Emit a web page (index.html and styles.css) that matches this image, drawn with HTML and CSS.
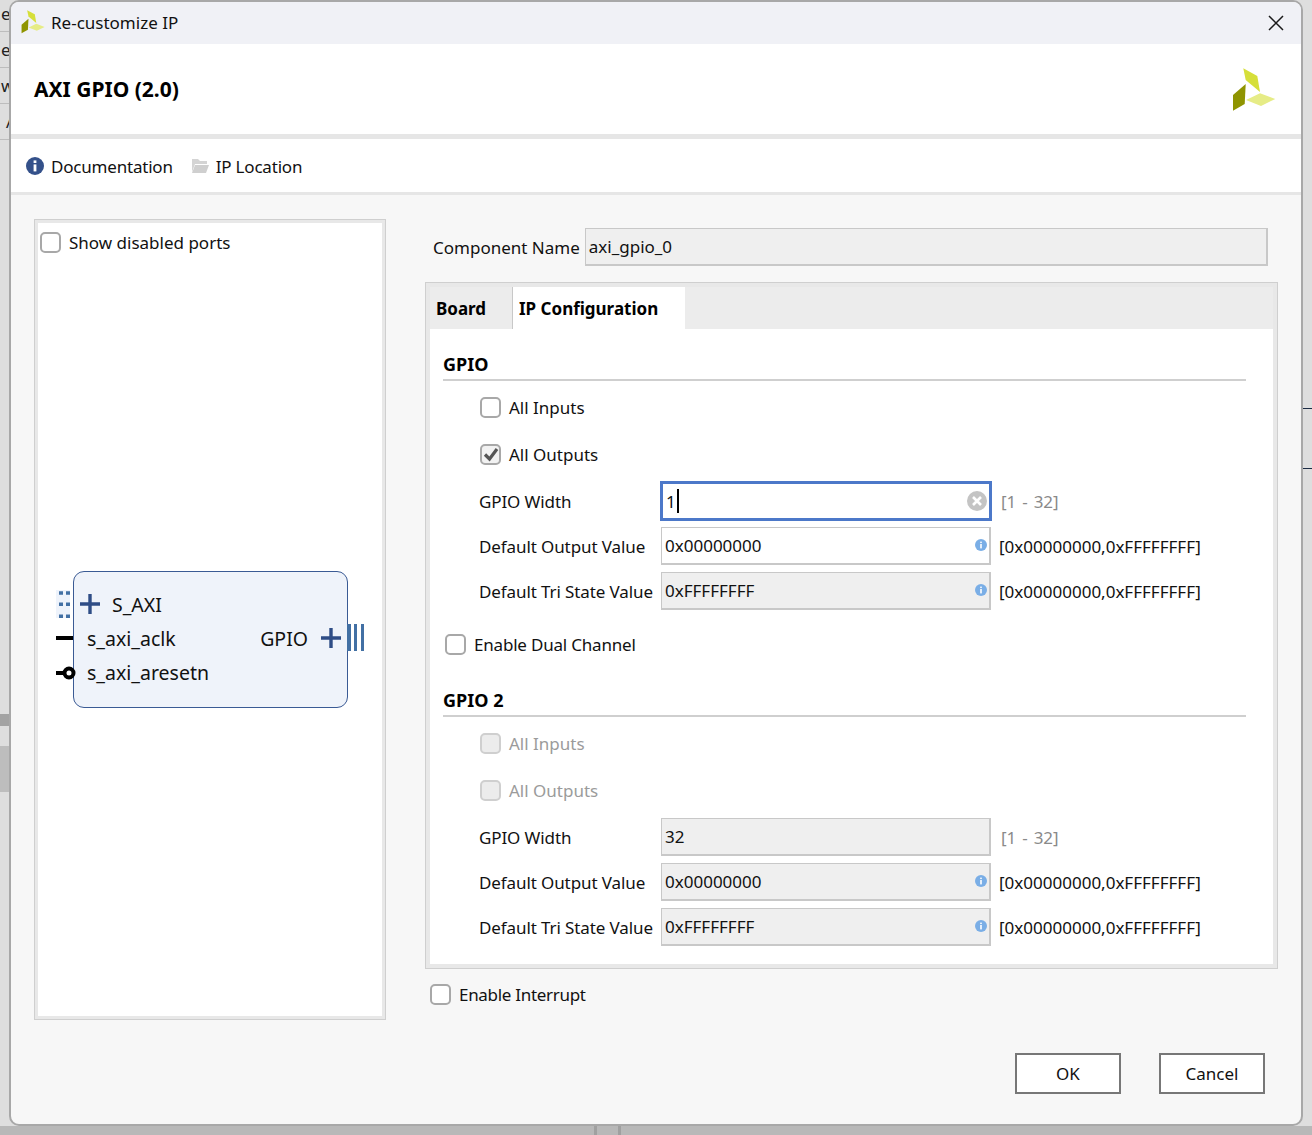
FILE: index.html
```html
<!DOCTYPE html>
<html lang="en">
<head>
<meta charset="utf-8">
<title>Re-customize IP</title>
<link rel="stylesheet" href="styles.css">
</head>
<body>
<div class="desktop">
  <div class="bg-frag f1">e</div>
  <div class="bg-frag f2">e</div>
  <div class="bg-frag f3">w</div>
  <div class="bg-frag f4">A</div>
  <div class="bg-hline h1"></div><div class="bg-hline h2"></div><div class="bg-hline h3"></div><div class="bg-hline h4"></div>
  <div class="bg-band"></div>
  <div class="bg-band2"></div>
  <div class="bg-bottom"></div>
  <div class="bg-tick t1"></div><div class="bg-tick t2"></div>
  <div class="bg-vb v1"></div><div class="bg-vb v2"></div>

  <div class="window">
    <div class="titlebar">
      <svg class="title-logo" viewBox="0 0 44 44" width="24" height="24"><polygon points="11.3,0.3 25.3,8 28,24 13.7,12" fill="#d6df3a"/><polygon points="14,32 28,25.3 43.3,31 29,38" fill="#e6ec86"/><polygon points="1,27 13.7,16 12.7,36 1,42.7" fill="#8f9400"/></svg>
      <span class="title-text">Re-customize IP</span>
      <svg class="close" viewBox="0 0 16 16" width="16" height="16"><path d="M1 1L15 15M15 1L1 15" stroke="#1a1a1a" stroke-width="1.5" fill="none"/></svg>
    </div>
    <div class="header">
      <h1>AXI GPIO (2.0)</h1>
      <svg class="header-logo" viewBox="0 -1 44 44" width="44" height="44"><polygon points="11.3,0.3 25.3,8 28,24 13.7,12" fill="#d6df3a"/><polygon points="14,32 28,25.3 43.3,31 29,38" fill="#e6ec86"/><polygon points="1,27 13.7,16 12.7,36 1,42.7" fill="#8f9400"/></svg>
    </div>
    <div class="toolbar">
      <span class="tool">
        <svg viewBox="0 0 18 18" width="18" height="18"><circle cx="9" cy="9" r="9" fill="#34518a"/><rect x="7.6" y="7.4" width="2.8" height="7" fill="#fff"/><rect x="7.6" y="3.4" width="2.8" height="2.6" fill="#fff"/></svg>
        Documentation
      </span>
      <span class="tool">
        <svg viewBox="0 0 18 16" width="18" height="16"><path d="M1 1h6l2 2h7v3H4L1 14z" fill="#d4d4d4"/><path d="M4 7h14l-3 8H1z" fill="#cfcfcf"/></svg>
        IP Location
      </span>
    </div>
    <div class="main">
      <div class="left-panel">
        <label class="check top-check"><span class="box"></span>Show disabled ports</label>
        <div class="block">
          <div class="block-row"><svg class="plus" viewBox="0 0 20 20" width="20" height="20"><path d="M0 10H20M10 0V20" stroke="#2f4d86" stroke-width="3.4"/></svg><span class="s-axi">S_AXI</span></div>
          <div class="block-row split"><span>s_axi_aclk</span><span class="gpio-port">GPIO<svg class="plus" viewBox="0 0 20 20" width="20" height="20"><path d="M0 10H20M10 0V20" stroke="#2f4d86" stroke-width="3.4"/></svg></span></div>
          <div class="block-row"><span>s_axi_aresetn</span></div>
        </div>
        <svg class="pin pin-dash" viewBox="0 0 14 28" width="14" height="28"><rect width="14" height="28" fill="#eef3fb"/><path d="M3 3H7M10 3H14M3 14.3H7M10 14.3H14M3 26.3H7M10 26.3H14" stroke="#4270a4" stroke-width="3.4"/></svg>
        <svg class="pin pin-clk" viewBox="0 0 17 4" width="17" height="4"><rect width="17" height="4" fill="#000"/></svg>
        <svg class="pin pin-rst" viewBox="0 0 20 16" width="20" height="16"><rect y="6" width="8" height="4" fill="#000"/><circle cx="13" cy="8" r="4.5" fill="#fff" stroke="#000" stroke-width="4"/></svg>
        <svg class="pin pin-bus" viewBox="0 0 17 27" width="17" height="27"><rect x="0" width="4" height="27" fill="#4270a4"/><rect x="7" width="3" height="27" fill="#4270a4"/><rect x="14" width="3" height="27" fill="#4270a4"/></svg>
      </div>
      <div class="right">
        <div class="comp-row"><span>Component Name</span><div class="field off comp-field">axi_gpio_0</div></div>
        <div class="pane">
          <div class="tabs"><span class="tab">Board</span><span class="tab active">IP Configuration</span></div>
          <div class="pane-body">
            <h2 class="sec">GPIO</h2>
            <label class="check opt first"><span class="box"></span>All Inputs</label>
            <label class="check opt"><span class="box on"><svg viewBox="0 0 16 16" width="16" height="16"><path d="M2 8.5L6.5 13L14 3" stroke="#555" stroke-width="3.2" fill="none"/></svg></span>All Outputs</label>
            <div class="grid">
              <span class="lab">GPIO Width</span>
              <div class="field focus"><span class="val">1</span><span class="caret"></span><svg class="clear" viewBox="0 0 20 20" width="20" height="20"><circle cx="10" cy="10" r="10" fill="#c4c4c4"/><path d="M6 6L14 14M14 6L6 14" stroke="#fff" stroke-width="2.6"/></svg></div>
              <span class="range dim">[1 - 32]</span>
              <span class="lab">Default Output Value</span>
              <div class="field">0x00000000<svg class="info" viewBox="0 0 12 12" width="12" height="12"><circle cx="6" cy="6" r="6" fill="#7aaee6"/><rect x="5.2" y="5" width="1.6" height="4.4" fill="#fff"/><rect x="5.2" y="2.6" width="1.6" height="1.5" fill="#fff"/></svg></div>
              <span class="range">[0x00000000,0xFFFFFFFF]</span>
              <span class="lab">Default Tri State Value</span>
              <div class="field off">0xFFFFFFFF<svg class="info" viewBox="0 0 12 12" width="12" height="12"><circle cx="6" cy="6" r="6" fill="#7aaee6"/><rect x="5.2" y="5" width="1.6" height="4.4" fill="#fff"/><rect x="5.2" y="2.6" width="1.6" height="1.5" fill="#fff"/></svg></div>
              <span class="range">[0x00000000,0xFFFFFFFF]</span>
            </div>
            <label class="check dual"><span class="box"></span>Enable Dual Channel</label>
            <h2 class="sec sec2">GPIO 2</h2>
            <label class="check opt first disabled"><span class="box"></span>All Inputs</label>
            <label class="check opt disabled"><span class="box"></span>All Outputs</label>
            <div class="grid grid2">
              <span class="lab">GPIO Width</span>
              <div class="field off">32</div>
              <span class="range dim">[1 - 32]</span>
              <span class="lab">Default Output Value</span>
              <div class="field off">0x00000000<svg class="info" viewBox="0 0 12 12" width="12" height="12"><circle cx="6" cy="6" r="6" fill="#7aaee6"/><rect x="5.2" y="5" width="1.6" height="4.4" fill="#fff"/><rect x="5.2" y="2.6" width="1.6" height="1.5" fill="#fff"/></svg></div>
              <span class="range">[0x00000000,0xFFFFFFFF]</span>
              <span class="lab">Default Tri State Value</span>
              <div class="field off">0xFFFFFFFF<svg class="info" viewBox="0 0 12 12" width="12" height="12"><circle cx="6" cy="6" r="6" fill="#7aaee6"/><rect x="5.2" y="5" width="1.6" height="4.4" fill="#fff"/><rect x="5.2" y="2.6" width="1.6" height="1.5" fill="#fff"/></svg></div>
              <span class="range">[0x00000000,0xFFFFFFFF]</span>
            </div>
          </div>
        </div>
        <label class="check irq"><span class="box"></span>Enable Interrupt</label>
      </div>
    </div>
    <div class="footer">
      <button class="btn">OK</button>
      <button class="btn">Cancel</button>
    </div>
  </div>
</div>
</body>
</html>
```
FILE: styles.css
```css
* { box-sizing: border-box; }
html, body { margin: 0; padding: 0; }
body { font-family: "Noto Sans", "Open Sans", sans-serif; font-size: 17px; color: #111; }
.desktop { position: relative; width: 1312px; height: 1135px; overflow: hidden; background: #dedede; }
.bg-frag { position: absolute; left: 1px; font-size: 17px; line-height: 20px; color: #222; }
.f1 { top: 4px; } .f2 { top: 40px; } .f3 { top: 76px; } .f4 { top: 112px; left: 6px; }
.bg-hline { position: absolute; left: 0; width: 10px; height: 1px; background: #bdbdbd; }
.h1 { top: 31px; } .h2 { top: 67px; } .h3 { top: 103px; } .h4 { top: 139px; }
.bg-band { position: absolute; left: 0; top: 714px; width: 10px; height: 12px; background: #a3a3a3; }
.bg-band2 { position: absolute; left: 0; top: 746px; width: 10px; height: 46px; background: #bdbdbd; }
.bg-bottom { position: absolute; left: 0; top: 1126px; width: 1312px; height: 9px; background: #b8b8b8; }
.bg-tick { position: absolute; left: 1303px; width: 9px; height: 1px; background: #1c2c44; }
.t1 { top: 408px; } .t2 { top: 468px; }
.bg-vb { position: absolute; top: 1126px; width: 3px; height: 9px; background: #a0a0a0; }
.v1 { left: 594px; } .v2 { left: 618px; }

.window { position: absolute; left: 9px; top: 0; width: 1294px; height: 1126px; display: flex; flex-direction: column; background: #f7f7f7; border: 2px solid #a8a8a8; border-radius: 10px; overflow: hidden; }
.titlebar { display: flex; align-items: center; height: 42px; flex: none; background: #f0f1f6; padding-left: 10px; }
.title-logo { flex: none; margin: -2px 6px 0 0; }
.title-text { margin-bottom: 2px; }
.close { margin-left: auto; margin-right: 17px; }
.header { height: 90px; flex: none; display: flex; align-items: center; justify-content: space-between; background: #fff; padding: 0 25px 0 23px; }
.header h1 { margin: 0; font-size: 21px; font-weight: 700; color: #000; }
.toolbar { flex: none; height: 61px; display: flex; align-items: center; gap: 18px; padding: 2px 0 0 15px; background: #fff; border-top: 5px solid #e6e6e6; border-bottom: 3px solid #e6e6e6; letter-spacing: -.2px; }
.tool { display: flex; align-items: center; gap: 7px; }
.tool svg { margin-bottom: 2px; }
.main { flex: none; display: flex; padding: 24px 0 0 23px; }
.left-panel { position: relative; width: 352px; height: 801px; flex: none; background: #fff; border: 1px solid #cfcfcf; outline: 3px solid #e8e8e8; outline-offset: -4px; padding: 10px 0 0 5px; }
.check { display: flex; align-items: center; gap: 8px; height: 24px; }
.box { width: 21px; height: 21px; flex: none; border: 2px solid #a8a8a8; border-radius: 5px; background: #fff; display: flex; align-items: center; justify-content: center; }
.box.on { background: #f2f2f2; }
.block { position: absolute; left: 38px; top: 351px; width: 275px; height: 137px; border: 1px solid #3a5a94; border-radius: 11px; background: #eff3fa; padding-top: 15px; }
.block-row { display: flex; align-items: center; height: 34px; padding-left: 13px; font-size: 19.5px; color: #111; }
.block-row:first-child { padding-left: 6px; }
.block-row.split { justify-content: space-between; padding-right: 6px; }
.s-axi { margin-left: 12px; }
.gpio-port { display: flex; align-items: center; gap: 13px; }
.pin { position: absolute; }
.pin-dash { left: 21px; top: 370px; }
.pin-clk { left: 21px; top: 416px; }
.pin-rst { left: 21px; top: 445px; }
.pin-bus { left: 312px; top: 404px; }
.right { flex: none; margin-left: 39px; width: 853px; padding-top: 9px; }
.comp-row { display: flex; align-items: center; gap: 5px; padding-left: 8px; width: 843px; }
.field { position: relative; flex: 1; height: 38px; background: #fff; border: 1px solid #c8c8c8; border-bottom-width: 2px; border-right-width: 2px; padding-left: 3px; display: flex; align-items: center; }
.field.off { background: #efefef; }
.pane { margin-top: 16px; width: 853px; height: 687px; border: 1px solid #cfcfcf; outline: 4px solid #e8e8e8; outline-offset: -5px; background: #ececec; padding: 4px; display: flex; flex-direction: column; }
.tabs { flex: none; height: 42px; display: flex; background: #ececec; font-weight: 700; color: #000; white-space: nowrap; }
.tab { display: flex; align-items: center; height: 42px; }
.tab:first-child { border-right: 1px solid #c8c8c8; width: 83px; padding-left: 6px; }
.tab.active { background: #fff; width: 172px; padding-left: 6px; }
.pane-body { flex: 1; background: #fff; padding: 20px 27px 0 13px; }
.sec { margin: 0; height: 32px; font-size: 18px; font-weight: 700; color: #000; line-height: 30px; border-bottom: 2px solid #cfcfcf; }
.sec2 { margin-top: 29px; }
.opt { padding-left: 37px; height: 24px; margin-top: 23px; }
.opt.first { margin-top: 14px; }
.disabled { color: #9b9b9b; }
.disabled .box { background: #ececec; border-color: #cfcfcf; }
.grid { display: grid; grid-template-columns: 182px 330px auto; grid-auto-rows: 38px; row-gap: 7px; align-items: center; margin-top: 16px; padding-left: 36px; }
.lab { white-space: nowrap; letter-spacing: -.1px; }
.range { padding-left: 8px; white-space: nowrap; }
.range.dim { color: #8a8a8a; padding-left: 10px; word-spacing: 1.5px; }
.field.focus { border: 3px solid #4c78c9; height: 40px; margin: 0 -1px; padding-left: 3px; }
.caret { width: 2px; height: 24px; background: #000; margin-left: 1px; }
.clear { position: absolute; right: 2px; top: 7px; }
.info { position: absolute; right: 2px; top: 11px; }
.dual { margin-top: 22px; padding-left: 2px; letter-spacing: -.2px; }
.irq { margin-top: 13px; padding-left: 5px; letter-spacing: -.3px; }
.footer { flex: 1; display: flex; justify-content: flex-end; align-items: flex-start; gap: 38px; padding: 33px 36px 0 0; }
.btn { width: 106px; height: 41px; background: #fff; border: 2px solid #777; font: inherit; color: #111; padding: 0; }
```
